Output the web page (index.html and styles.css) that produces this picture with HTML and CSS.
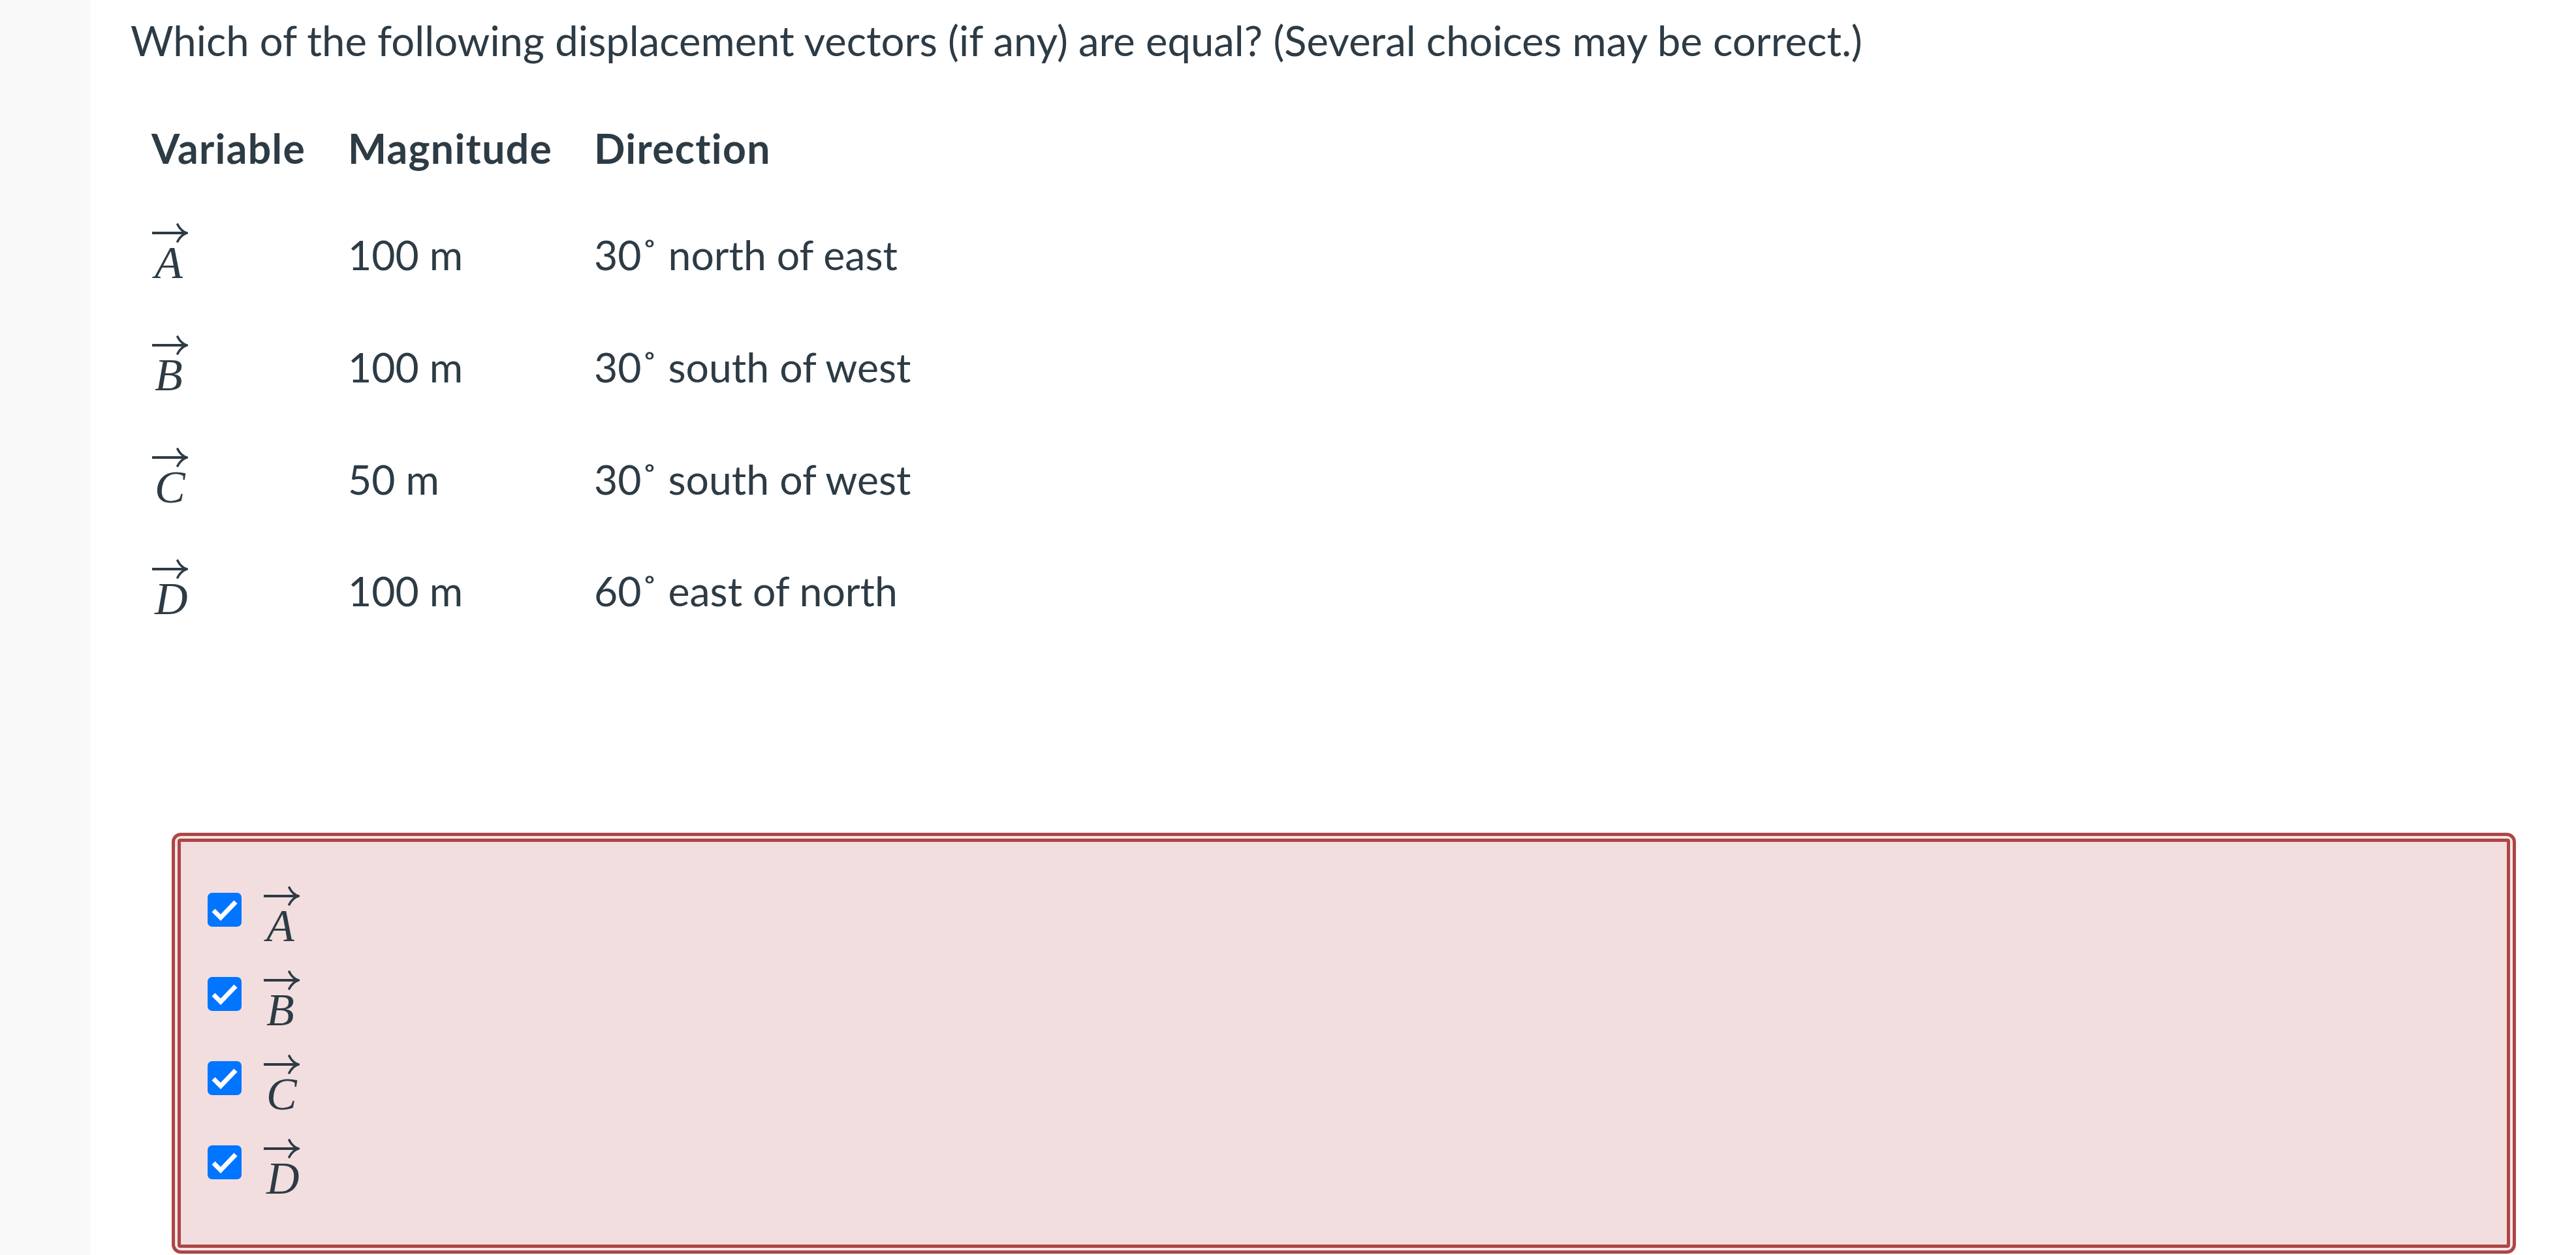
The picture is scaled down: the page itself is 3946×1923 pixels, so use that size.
FILE: index.html
```html
<!DOCTYPE html>
<html lang="en">
<head>
<meta charset="utf-8">
<title>Displacement vectors question</title>
<link rel="stylesheet" href="styles.css">
</head>
<body>
<div class="page">
  <aside class="sidebar"></aside>
  <main class="main">
    <p class="question">Which of the following displacement vectors (if any) are equal? (Several choices may be correct.)</p>
    <table class="vectors">
      <thead>
        <tr><th class="col-var">Variable</th><th class="col-mag">Magnitude</th><th class="col-dir">Direction</th></tr>
      </thead>
      <tbody>
        <tr>
          <td class="col-var"><span class="vec"><svg class="arrow" width="56" height="30" viewBox="0 0 56 30"><path d="M1 15H52" /><path class="head" d="M40 2Q45 12 54 15Q45 18 40 28" /></svg><span class="ltr">A</span></span></td>
          <td>100 m</td>
          <td>30˚ north of east</td>
        </tr>
        <tr>
          <td class="col-var"><span class="vec"><svg class="arrow" width="56" height="30" viewBox="0 0 56 30"><path d="M1 15H52" /><path class="head" d="M40 2Q45 12 54 15Q45 18 40 28" /></svg><span class="ltr">B</span></span></td>
          <td>100 m</td>
          <td>30˚ south of west</td>
        </tr>
        <tr>
          <td class="col-var"><span class="vec"><svg class="arrow" width="56" height="30" viewBox="0 0 56 30"><path d="M1 15H52" /><path class="head" d="M40 2Q45 12 54 15Q45 18 40 28" /></svg><span class="ltr">C</span></span></td>
          <td>50 m</td>
          <td>30˚ south of west</td>
        </tr>
        <tr>
          <td class="col-var"><span class="vec"><svg class="arrow" width="56" height="30" viewBox="0 0 56 30"><path d="M1 15H52" /><path class="head" d="M40 2Q45 12 54 15Q45 18 40 28" /></svg><span class="ltr">D</span></span></td>
          <td>100 m</td>
          <td>60˚ east of north</td>
        </tr>
      </tbody>
    </table>

    <div class="answer-outer">
      <div class="answer-inner">
        <ul class="choices">
          <li class="choice">
            <span class="cb"><svg width="52" height="52" viewBox="0 0 52 52"><path d="M9 27L20 38L43 14" /></svg></span>
            <span class="vec"><svg class="arrow" width="56" height="30" viewBox="0 0 56 30"><path d="M1 15H52" /><path class="head" d="M40 2Q45 12 54 15Q45 18 40 28" /></svg><span class="ltr">A</span></span>
          </li>
          <li class="choice">
            <span class="cb"><svg width="52" height="52" viewBox="0 0 52 52"><path d="M9 27L20 38L43 14" /></svg></span>
            <span class="vec"><svg class="arrow" width="56" height="30" viewBox="0 0 56 30"><path d="M1 15H52" /><path class="head" d="M40 2Q45 12 54 15Q45 18 40 28" /></svg><span class="ltr">B</span></span>
          </li>
          <li class="choice">
            <span class="cb"><svg width="52" height="52" viewBox="0 0 52 52"><path d="M9 27L20 38L43 14" /></svg></span>
            <span class="vec"><svg class="arrow" width="56" height="30" viewBox="0 0 56 30"><path d="M1 15H52" /><path class="head" d="M40 2Q45 12 54 15Q45 18 40 28" /></svg><span class="ltr">C</span></span>
          </li>
          <li class="choice">
            <span class="cb"><svg width="52" height="52" viewBox="0 0 52 52"><path d="M9 27L20 38L43 14" /></svg></span>
            <span class="vec"><svg class="arrow" width="56" height="30" viewBox="0 0 56 30"><path d="M1 15H52" /><path class="head" d="M40 2Q45 12 54 15Q45 18 40 28" /></svg><span class="ltr">D</span></span>
          </li>
        </ul>
      </div>
    </div>
  </main>
</div>
</body>
</html>
```

FILE: styles.css
```css
html, body {
  margin: 0;
  padding: 0;
  background: #ffffff;
}

.page {
  display: flex;
  min-height: 100vh;
  font-family: Lato, "Open Sans", sans-serif;
  color: #2d3b45;
  font-size: 62.5px;
  line-height: 1.5;
}

.sidebar {
  width: 138px;
  flex: none;
  background: #f9f9f9;
}

.main {
  flex: 1;
  padding: 15px 0 0 62px;
}

.question {
  margin: 0 0 40px;
  font-size: 63.4px;
  line-height: 93.75px;
}

.vectors {
  border-collapse: collapse;
  border-spacing: 0;
}

.vectors th,
.vectors td {
  text-align: left;
  vertical-align: baseline;
  padding: 38.5px 0;
  white-space: nowrap;
}

.vectors th {
  font-weight: 700;
  letter-spacing: 1.3px;
  padding-top: 31px;
  padding-bottom: 30px;
}

.vectors .col-var {
  width: 301px;
  padding-left: 32px;
}

.vectors .col-mag {
  width: 377px;
}

.vec {
  display: inline-block;
  vertical-align: -12px;
  line-height: normal;
}

.arrow {
  display: block;
  fill: none;
  stroke: #2d3b45;
  stroke-width: 4;
}

.arrow .head {
  stroke-width: 3.6;
  stroke-linecap: round;
}

.ltr {
  display: block;
  font-family: "Liberation Serif", "Times New Roman", serif;
  font-style: italic;
  font-size: 70px;
  line-height: 62px;
  padding-left: 5px;
}

.answer-outer {
  margin: 285px 92px 0 63px;
  border: 5px solid #ad4646;
  border-radius: 14px;
  padding: 4px;
  background: #f6e6e6;
}

.answer-inner {
  border: 5px solid #ad4646;
  border-radius: 4px;
  background: #f2dede;
  padding: 68px 41px 70px;
}

.choices {
  list-style: none;
  margin: 0;
  padding: 0;
  display: flex;
  flex-direction: column;
  gap: 37px;
}

.choice {
  display: flex;
  align-items: flex-start;
  gap: 33px;
}

.cb {
  flex: none;
  width: 52px;
  height: 52px;
  margin-top: 10px;
  border-radius: 7px;
  background: #0075ff;
}

.cb svg {
  display: block;
  fill: none;
  stroke: #ffffff;
  stroke-width: 7;
}
```
